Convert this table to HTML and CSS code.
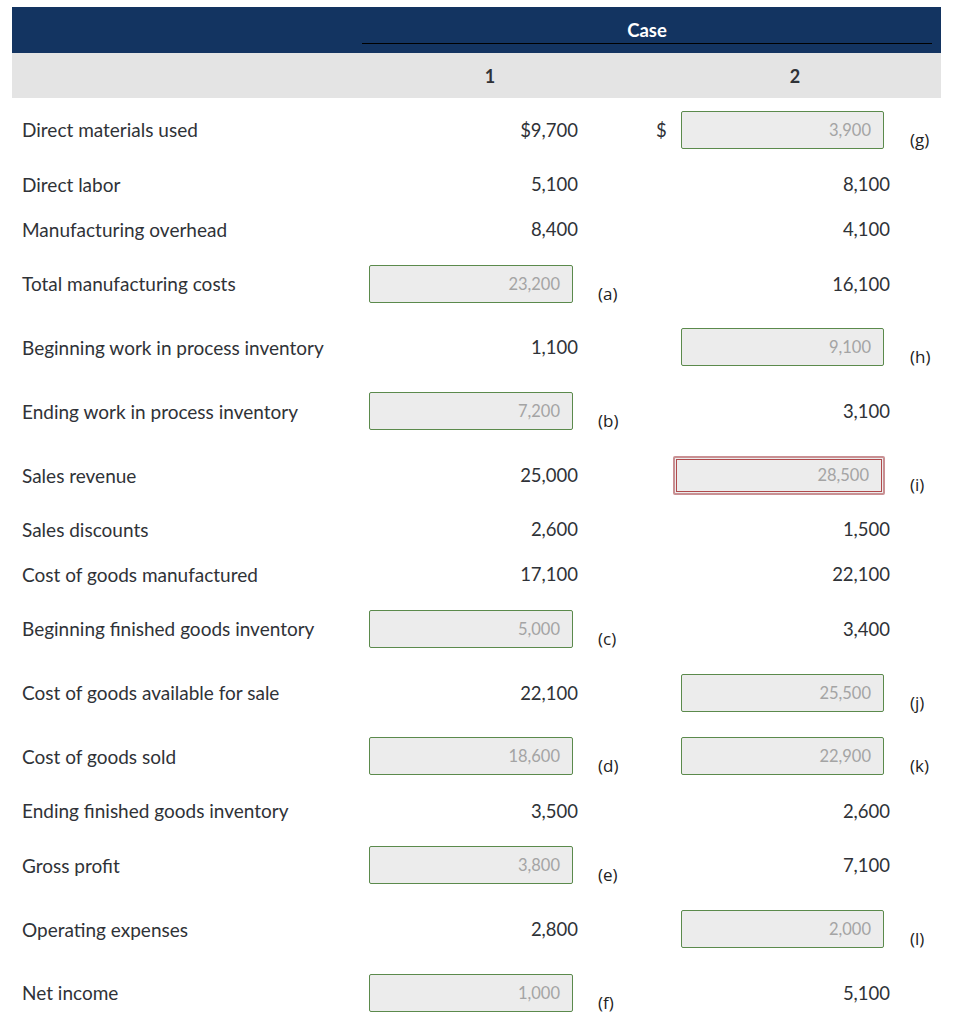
FILE: index.html
```html
<!DOCTYPE html>
<html>
<head>
<meta charset="utf-8">
<link rel="stylesheet" href="styles.css">
</head>
<body>
<div class="sheet">
  <div class="head-top">
    <div class="case-cell"><span>Case</span></div>
  </div>
  <div class="head-sub">
    <div class="h1">1</div>
    <div class="h2">2</div>
  </div>

  <div class="row tall">
    <div class="lbl">Direct materials used</div>
    <div class="v1"><span class="num">$9,700</span></div>
    <div class="l1"></div>
    <div class="dol">$</div>
    <div class="v2"><div class="box">3,900</div></div>
    <div class="l2"><span class="tag">(g)</span></div>
  </div>

  <div class="row">
    <div class="lbl">Direct labor</div>
    <div class="v1"><span class="num">5,100</span></div>
    <div class="l1"></div>
    <div class="dol"></div>
    <div class="v2"><span class="num">8,100</span></div>
    <div class="l2"></div>
  </div>

  <div class="row">
    <div class="lbl">Manufacturing overhead</div>
    <div class="v1"><span class="num">8,400</span></div>
    <div class="l1"></div>
    <div class="dol"></div>
    <div class="v2"><span class="num">4,100</span></div>
    <div class="l2"></div>
  </div>

  <div class="row tall">
    <div class="lbl">Total manufacturing costs</div>
    <div class="v1"><div class="box">23,200</div></div>
    <div class="l1"><span class="tag">(a)</span></div>
    <div class="dol"></div>
    <div class="v2"><span class="num">16,100</span></div>
    <div class="l2"></div>
  </div>

  <div class="row tall">
    <div class="lbl">Beginning work in process inventory</div>
    <div class="v1"><span class="num">1,100</span></div>
    <div class="l1"></div>
    <div class="dol"></div>
    <div class="v2"><div class="box">9,100</div></div>
    <div class="l2"><span class="tag">(h)</span></div>
  </div>

  <div class="row tall">
    <div class="lbl">Ending work in process inventory</div>
    <div class="v1"><div class="box">7,200</div></div>
    <div class="l1"><span class="tag">(b)</span></div>
    <div class="dol"></div>
    <div class="v2"><span class="num">3,100</span></div>
    <div class="l2"></div>
  </div>

  <div class="row tall">
    <div class="lbl">Sales revenue</div>
    <div class="v1"><span class="num">25,000</span></div>
    <div class="l1"></div>
    <div class="dol"></div>
    <div class="v2"><div class="box-err"><div class="box-err-inner">28,500</div></div></div>
    <div class="l2"><span class="tag">(i)</span></div>
  </div>

  <div class="row">
    <div class="lbl">Sales discounts</div>
    <div class="v1"><span class="num">2,600</span></div>
    <div class="l1"></div>
    <div class="dol"></div>
    <div class="v2"><span class="num">1,500</span></div>
    <div class="l2"></div>
  </div>

  <div class="row">
    <div class="lbl">Cost of goods manufactured</div>
    <div class="v1"><span class="num">17,100</span></div>
    <div class="l1"></div>
    <div class="dol"></div>
    <div class="v2"><span class="num">22,100</span></div>
    <div class="l2"></div>
  </div>

  <div class="row tall">
    <div class="lbl">Beginning finished goods inventory</div>
    <div class="v1"><div class="box">5,000</div></div>
    <div class="l1"><span class="tag">(c)</span></div>
    <div class="dol"></div>
    <div class="v2"><span class="num">3,400</span></div>
    <div class="l2"></div>
  </div>

  <div class="row tall">
    <div class="lbl">Cost of goods available for sale</div>
    <div class="v1"><span class="num">22,100</span></div>
    <div class="l1"></div>
    <div class="dol"></div>
    <div class="v2"><div class="box">25,500</div></div>
    <div class="l2"><span class="tag">(j)</span></div>
  </div>

  <div class="row tall">
    <div class="lbl">Cost of goods sold</div>
    <div class="v1"><div class="box">18,600</div></div>
    <div class="l1"><span class="tag">(d)</span></div>
    <div class="dol"></div>
    <div class="v2"><div class="box">22,900</div></div>
    <div class="l2"><span class="tag">(k)</span></div>
  </div>

  <div class="row">
    <div class="lbl">Ending finished goods inventory</div>
    <div class="v1"><span class="num">3,500</span></div>
    <div class="l1"></div>
    <div class="dol"></div>
    <div class="v2"><span class="num">2,600</span></div>
    <div class="l2"></div>
  </div>

  <div class="row tall">
    <div class="lbl">Gross profit</div>
    <div class="v1"><div class="box">3,800</div></div>
    <div class="l1"><span class="tag">(e)</span></div>
    <div class="dol"></div>
    <div class="v2"><span class="num">7,100</span></div>
    <div class="l2"></div>
  </div>

  <div class="row tall">
    <div class="lbl">Operating expenses</div>
    <div class="v1"><span class="num">2,800</span></div>
    <div class="l1"></div>
    <div class="dol"></div>
    <div class="v2"><div class="box">2,000</div></div>
    <div class="l2"><span class="tag">(l)</span></div>
  </div>

  <div class="row tall">
    <div class="lbl">Net income</div>
    <div class="v1"><div class="box">1,000</div></div>
    <div class="l1"><span class="tag">(f)</span></div>
    <div class="dol"></div>
    <div class="v2"><span class="num">5,100</span></div>
    <div class="l2"></div>
  </div>
</div>
</body>
</html>
```

FILE: styles.css
```css
html, body {
  margin: 0;
  padding: 0;
  background: #ffffff;
}
body {
  padding: 7px 16px 0 12px;
  font-family: Lato, "Liberation Sans", sans-serif;
  color: #2f3237;
}
.sheet {
  width: 929px;
}
.head-top {
  background: #133461;
  height: 46px;
  display: flex;
  padding-left: 350px;
  padding-right: 9px;
}
.case-cell {
  flex: 1;
  height: 37px;
  border-bottom: 1px solid #000;
  display: flex;
  align-items: center;
  justify-content: center;
  color: #ffffff;
  font-weight: bold;
  font-size: 18.5px;
  padding-top: 10px;
  box-sizing: border-box;
}
.head-sub {
  background: #e4e4e4;
  height: 45px;
  display: grid;
  grid-template-columns: 350px 278px 301px;
  align-items: center;
  font-weight: bold;
  font-size: 18px;
  color: #2f3237;
}
.h1 {
  grid-column: 2;
  text-align: center;
  padding-right: 22px;
}
.h2 {
  grid-column: 3;
  text-align: center;
  padding-left: 9px;
}
.row {
  display: grid;
  grid-template-columns: 350px 224px 54px 36px 219px 46px;
  height: 45px;
  align-items: center;
  font-size: 18.5px;
}
.row.tall {
  height: 63.8px;
}
.lbl {
  padding-left: 10px;
  font-size: 19px;
}
.v1 {
  padding-left: 7px;
  padding-right: 8px;
  text-align: right;
}
.v2 {
  padding-left: 5px;
  padding-right: 5px;
  text-align: right;
}
.dol {
  text-align: left;
  padding-left: 16px;
}
.l1 {
  padding-left: 12px;
}
.l2 {
  padding-left: 15px;
}
.tag {
  display: inline-block;
  font-family: "Open Sans", "DejaVu Sans", sans-serif;
  font-size: 17px;
  color: #222;
  margin-top: 19px;
}
.box {
  width: 204px;
  height: 38px;
  box-sizing: border-box;
  border: 1px solid #5b8a4c;
  border-radius: 2px;
  background: #ececec;
  color: #a4a4a4;
  font-size: 16.5px;
  text-align: right;
  padding-right: 12px;
  line-height: 36px;
}
.v2 .box {
  width: 203px;
}
.box-err {
  margin-left: -8px;
  width: 212px;
  height: 39px;
  box-sizing: border-box;
  border: 2px solid #c99093;
  border-radius: 2px;
  padding: 1px;
  background: #ececec;
}
.box-err-inner {
  height: 100%;
  box-sizing: border-box;
  border: 1px solid #b04a4c;
  color: #a4a4a4;
  font-size: 16.5px;
  text-align: right;
  padding-right: 12px;
  line-height: 31px;
}
```
